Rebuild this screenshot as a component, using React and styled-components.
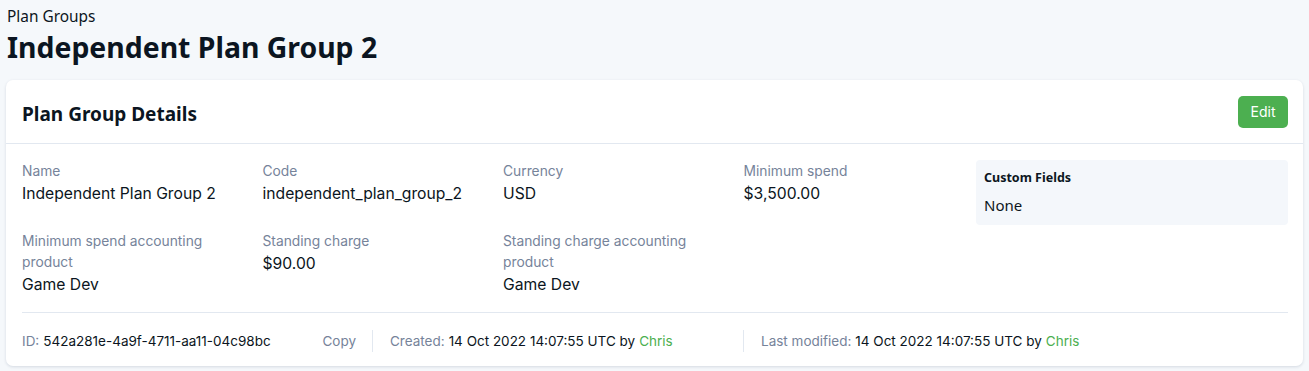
import React from 'react';
import styled, { createGlobalStyle } from 'styled-components';

const GlobalStyle = createGlobalStyle`
    body {
        margin: 0;
        background: #f5f8fb;
        font-family: "Noto Sans", "Liberation Sans", sans-serif;
        color: #0b1521;
    }
    * {
        box-sizing: border-box;
    }
`

const Page = styled.div`
    padding: 7px 6px 5px 6px;
`

const Breadcrumb = styled.div`
    font-size: 15.4px;
    line-height: 19px;
    padding-left: 1px;
`

const Title = styled.h1`
    margin: 1px 0 13px 1px;
    font-size: 28.4px;
    line-height: 40px;
    font-weight: 700;
`

const Card = styled.div`
    background: #fff;
    border-radius: 7px;
    box-shadow: 0 1px 3px rgba(30, 50, 80, 0.15);
`

const CardHeader = styled.div`
    display: flex;
    align-items: center;
    justify-content: space-between;
    height: 64px;
    padding: 0 15px 0 16px;
    border-bottom: 1px solid #e2e8f0;
`

const CardTitle = styled.h2`
    margin: 4px 0 0 0;
    font-size: 19px;
    font-weight: 700;
`

const EditButton = styled.button`
    border: none;
    background: #4caf50;
    color: #fff;
    height: 32px;
    width: 50px;
    border-radius: 5px;
    font-family: "Inter", sans-serif;
    font-size: 14px;
`

const CardBody = styled.div`
    padding: 16px 15px 0 16px;
`

const DetailsLayout = styled.div`
    display: grid;
    grid-template-columns: 954px 1fr;
`

const FieldGrid = styled.div`
    display: grid;
    grid-template-columns: repeat(3, 240.5px) 1fr;
    row-gap: 26px;
    align-items: start;
    padding-top: 1px;
`

const Field = styled.div`
    font-family: "Inter", sans-serif;
    padding-right: 40px;
`

const Label = styled.div`
    font-size: 13.8px;
    line-height: 21px;
    color: #76839a;
`

const Value = styled.div`
    font-size: 15.7px;
    line-height: 22px;
    margin-top: 1px;
    color: #0b1521;
`

const CustomBox = styled.div`
    align-self: start;
    background: #f4f7fb;
    border-radius: 4px;
    padding: 8px 8px 9px 8px;
`

const CustomTitle = styled.div`
    font-size: 12.5px;
    font-weight: 700;
    line-height: 19px;
`

const CustomValue = styled.div`
    font-size: 15px;
    line-height: 22px;
    margin-top: 7px;
`

const Footer = styled.div`
    display: flex;
    align-items: center;
    margin-top: 16px;
    border-top: 1px solid #e2e8f0;
    height: 54px;
    padding-top: 2px;
    font-family: "Inter", sans-serif;
    font-size: 13.5px;
`

const FooterItem = styled.div`
    display: flex;
    align-items: center;
    width: ${({ $width }) => $width || 'auto'};
    height: 22px;
    padding-left: ${({ $divided }) => ($divided ? '17px' : '0')};
    border-left: ${({ $divided }) => ($divided ? '1px solid #e2e8f0' : 'none')};
    white-space: nowrap;
`

const Muted = styled.span`
    color: #76839a;
    margin-right: 4px;
`

const Copy = styled.span`
    color: #76839a;
    margin-left: auto;
    padding-right: 16px;
`

const UserLink = styled.span`
    color: #4caf50;
    margin-left: 4px;
`

const fields = [
    { label: 'Name', value: 'Independent Plan Group 2' },
    { label: 'Code', value: 'independent_plan_group_2' },
    { label: 'Currency', value: 'USD' },
    { label: 'Minimum spend', value: '$3,500.00' },
    { label: 'Minimum spend accounting product', value: 'Game Dev' },
    { label: 'Standing charge', value: '$90.00' },
    { label: 'Standing charge accounting product', value: 'Game Dev' },
]

const App = () => {
    return (
        <Page>
            <GlobalStyle />
            <Breadcrumb>Plan Groups</Breadcrumb>
            <Title>Independent Plan Group 2</Title>
            <Card>
                <CardHeader>
                    <CardTitle>Plan Group Details</CardTitle>
                    <EditButton>Edit</EditButton>
                </CardHeader>
                <CardBody>
                    <DetailsLayout>
                        <FieldGrid>
                            {fields.map((f) => (
                                <Field key={f.label}>
                                    <Label>{f.label}</Label>
                                    <Value>{f.value}</Value>
                                </Field>
                            ))}
                        </FieldGrid>
                        <CustomBox>
                            <CustomTitle>Custom Fields</CustomTitle>
                            <CustomValue>None</CustomValue>
                        </CustomBox>
                    </DetailsLayout>
                    <Footer>
                        <FooterItem $width="350px">
                            <Muted>ID:</Muted>
                            542a281e-4a9f-4711-aa11-04c98bc
                            <Copy>Copy</Copy>
                        </FooterItem>
                        <FooterItem $divided $width="371px">
                            <Muted>Created:</Muted>
                            14 Oct 2022 14:07:55 UTC by
                            <UserLink>Chris</UserLink>
                        </FooterItem>
                        <FooterItem $divided>
                            <Muted>Last modified:</Muted>
                            14 Oct 2022 14:07:55 UTC by
                            <UserLink>Chris</UserLink>
                        </FooterItem>
                    </Footer>
                </CardBody>
            </Card>
        </Page>
    )
}

export default App;
